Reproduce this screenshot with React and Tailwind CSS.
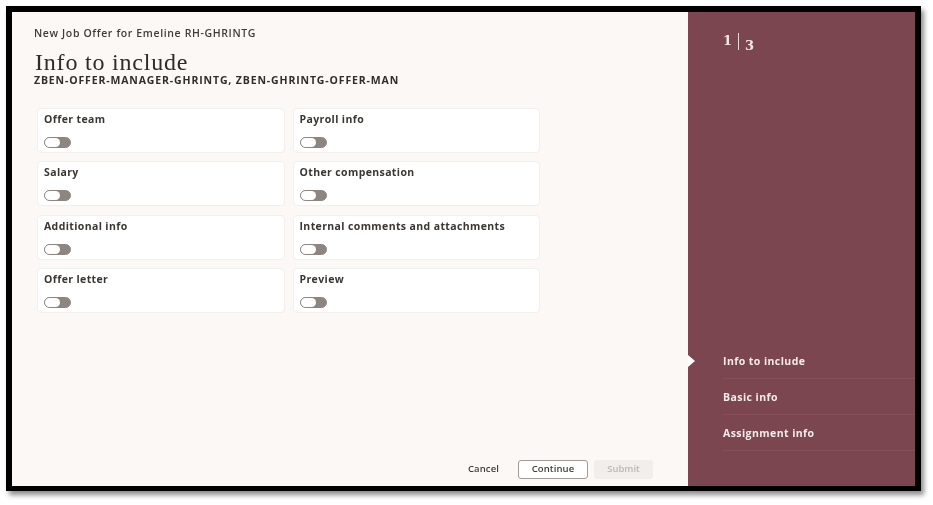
const sections = [
  "Offer team",
  "Payroll info",
  "Salary",
  "Other compensation",
  "Additional info",
  "Internal comments and attachments",
  "Offer letter",
  "Preview",
];

const steps = ["Info to include", "Basic info", "Assignment info"];

const Toggle = () => (
  <div className="flex h-[11px] w-[27px] rounded-[6px] border border-[#8d857f] bg-[#8d857f]">
    <div className="h-full w-[15px] rounded-[5px] bg-white" />
  </div>
);

const SectionCard = ({ label }) => (
  <div className="flex h-[45px] flex-col justify-between rounded-[4px] border border-[#f3efec] bg-white pb-[4px] pl-[6px] pt-[3px]">
    <div className="text-[10.5px] font-bold leading-[14px] tracking-[0.38px] text-[#3a3633]">{label}</div>
    <Toggle />
  </div>
);

export default function App() {
  return (
    <div className="h-[505px] w-[933px] overflow-hidden bg-white pl-[6px] pt-[6px] font-['Open_Sans',sans-serif] blur-[0.5px]">
      <div className="flex h-[485px] w-[915px] border-[6px] border-b-[5px] border-black shadow-[3px_4px_5px_rgba(0,0,0,0.45)]">
        <div className="flex flex-1 flex-col bg-[#fbf8f6] pb-[7px] pl-[22px] pr-[35px] pt-[15px]">
          <div className="text-[10.5px] font-semibold leading-[13px] tracking-[0.63px] text-[#3f3b38]">
            New Job Offer for Emeline RH-GHRINTG
          </div>
          <h1 className="ml-px mt-[10px] font-['Liberation_Serif',serif] text-[24px] leading-[25px] tracking-[0.8px] text-[#2f2b29]">
            Info to include
          </h1>
          <div className="-mt-px text-[10.5px] font-bold leading-[12px] tracking-[0.86px] text-[#312d2a]">
            ZBEN-OFFER-MANAGER-GHRINTG, ZBEN-GHRINTG-OFFER-MAN
          </div>
          <div className="ml-[3px] mt-[22px] grid w-[503px] grid-cols-2 gap-x-[8px] gap-y-[8.3px]">
            {sections.map((label) => (
              <SectionCard key={label} label={label} />
            ))}
          </div>
          <div className="mt-auto flex items-center justify-end">
            <button className="mr-[19px] text-[9.5px] font-semibold tracking-[0.1px] text-[#3f3b38]">Cancel</button>
            <button className="mr-[6px] h-[19px] w-[70px] rounded-[3px] border border-[#a39c96] bg-white text-[9.5px] font-semibold tracking-[0.1px] text-[#3f3b38]">
              Continue
            </button>
            <button className="h-[19px] w-[59px] rounded-[3px] bg-[#f1eeeb] text-[9.5px] font-semibold text-[#bdb8b3]">
              Submit
            </button>
          </div>
        </div>
        <div className="relative flex w-[227px] flex-col justify-between bg-[#7b4650] pb-[35px] pl-[35px] pt-[21px]">
          <div className="flex items-start font-['DejaVu_Serif',serif] text-[13px] font-bold text-[#efe7e4]">
            <span className="leading-[15px]">1</span>
            <span className="ml-[6px] mr-[6px] h-[17px] w-px bg-[#e6dcda]" />
            <span className="pt-[5px] leading-[15px]">3</span>
          </div>
          <div>
            {steps.map((step, i) => (
              <div
                key={step}
                className="relative flex h-[36px] items-center border-b border-[#85505a] pt-[2px] text-[10.5px] font-bold tracking-[0.43px] text-[#f3ecea]"
              >
                {i === 0 && (
                  <span className="absolute left-[-35px] top-[12px] h-0 w-0 border-y-[6px] border-l-[7px] border-y-transparent border-l-white" />
                )}
                {step}
              </div>
            ))}
          </div>
        </div>
      </div>
    </div>
  );
}
